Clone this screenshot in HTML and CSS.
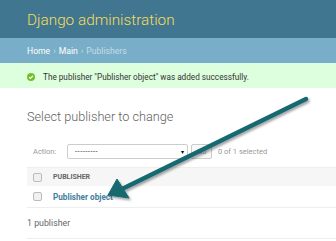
FILE: index.html
```html
<!DOCTYPE html>
<html>
<head>
  <title>Select publisher to change | Django site admin</title>
  <link rel="stylesheet" href="styles.css">
</head>
<body>
  <div class="header">
    <h1 class="branding">Django administration</h1>
  </div>
  <div class="breadcrumbs">
    <a href="#">Home</a> &rsaquo; <a href="#">Main</a> &rsaquo; <span class="current">Publishers</span>
  </div>
  <div class="messagelist">
    <span class="check">
      <svg width="8" height="8" viewBox="0 0 8 8">
        <circle cx="4" cy="4" r="4" fill="#70bf2b"/>
        <path d="M2.1 4.1 L3.4 5.4 L5.9 2.8" fill="none" stroke="#fff" stroke-width="1.2"/>
      </svg>
    </span>
    The publisher "Publisher object" was added successfully.
  </div>

  <div class="content">
    <h2 class="title">Select publisher to change</h2>

    <div class="actions">
      <label>Action:</label>
      <div class="select">
        <span>---------</span>
        <span class="caret">&#9662;</span>
      </div>
      <button class="go">Go</button>
      <span class="counter">0 of 1 selected</span>
    </div>

    <table class="results">
      <thead>
        <tr>
          <th class="cb"><span class="box"></span></th>
          <th>PUBLISHER</th>
        </tr>
      </thead>
      <tbody>
        <tr>
          <td class="cb"><span class="box"></span></td>
          <td><a href="#">Publisher object</a></td>
        </tr>
      </tbody>
    </table>
    <p class="paginator">1 publisher</p>
  </div>

  <!-- annotation arrow drawn over the page -->
  <svg class="arrow" width="336" height="241" viewBox="0 0 336 241">
    <defs>
      <filter id="shadow" x="-10%" y="-10%" width="130%" height="130%">
        <feDropShadow dx="1.5" dy="2" stdDeviation="1.2" flood-color="#000" flood-opacity="0.35"/>
      </filter>
    </defs>
    <g filter="url(#shadow)" fill="#196970" stroke="#196970">
      <line x1="306" y1="99" x2="122" y2="189" stroke-width="4.5" stroke-linecap="round"/>
      <polygon points="108,195 117,179 129,198" stroke-width="1" stroke-linejoin="round"/>
    </g>
  </svg>
</body>
</html>
```

FILE: styles.css
```css
body {
  margin: 0;
  font-family: Roboto, "Liberation Sans", sans-serif;
  color: #333;
  background: #fff;
  position: relative;
  overflow: hidden;
}

a {
  text-decoration: none;
}

.header {
  height: 38px;
  background-color: #417690;
  padding-left: 27px;
  display: flex;
  align-items: center;
}

.branding {
  margin: 0;
  font-size: 15.3px;
  font-weight: 300;
  color: #f5dd5d;
  padding-top: 2px;
}

.breadcrumbs {
  height: 25px;
  background-color: #79aec8;
  padding-left: 27px;
  display: flex;
  align-items: center;
  gap: 3px;
  font-size: 8.6px;
  color: #c4dce8;
}

.breadcrumbs a {
  color: #fff;
}

.messagelist {
  height: 25px;
  background-color: #dfd;
  padding-left: 27px;
  padding-top: 3px;
  box-sizing: border-box;
  display: flex;
  align-items: center;
  gap: 8px;
  font-size: 8.2px;
  color: #333;
}

.check {
  display: flex;
}

.content {
  padding-left: 27px;
}

.title {
  margin: 0;
  padding-top: 21px;
  font-size: 12.7px;
  font-weight: 300;
  color: #5f5f5f;
  height: 29px;
}

.actions {
  display: flex;
  align-items: center;
  height: 15px;
  margin-top: 6px;
  font-size: 7.5px;
  color: #999;
}

.actions label {
  margin-left: 6px;
  width: 34px;
}

.select {
  width: 121px;
  height: 15px;
  box-sizing: border-box;
  border: 1px solid #ccc;
  border-radius: 2px;
  display: flex;
  align-items: center;
  justify-content: space-between;
  padding: 0 3px 0 7px;
  color: #333;
  letter-spacing: 0.5px;
}

.caret {
  font-size: 6px;
  color: #000;
}

.go {
  margin-left: 3px;
  width: 21px;
  height: 15px;
  border: 1px solid #ccc;
  border-radius: 2px;
  background: #f8f8f8;
  font-size: 7.5px;
  color: #999;
  padding: 0;
}

.counter {
  margin-left: 6px;
}

.results {
  margin-top: 8px;
  width: 100%;
  border-collapse: collapse;
  font-size: 7px;
}

.results th {
  height: 18px;
  background-color: #f6f6f6;
  border-top: 1px solid #eee;
  text-align: left;
  font-weight: bold;
  color: #666;
  padding: 0;
}

.results td {
  height: 21px;
  border-bottom: 1px solid #eee;
  padding: 0;
}

.results td a {
  font-size: 8.2px;
  font-weight: bold;
  color: #447e9b;
}

.results .cb {
  width: 20px;
  padding-left: 6px;
}

.box {
  display: block;
  width: 7px;
  height: 7px;
  border: 1px solid #bbb;
  border-radius: 2px;
  background: #f0f0f0;
}

.paginator {
  margin: 0;
  height: 30px;
  line-height: 30px;
  border-bottom: 1px solid #eee;
  font-size: 8.8px;
  color: #666;
}

.arrow {
  position: absolute;
  left: 0;
  top: 0;
}
```
